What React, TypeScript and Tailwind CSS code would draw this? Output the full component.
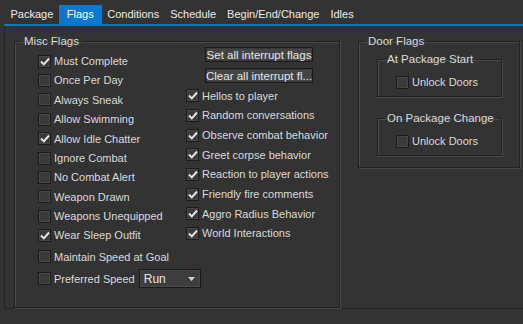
import React from 'react';

const Check: React.FC<{ checked?: boolean }> = ({ checked }) => (
    <span className="w-[13px] h-[13px] shrink-0 border border-[#1c1c1c] bg-[#3a3a3a] shadow-[inset_0_0_0_1px_#474747] flex items-center justify-center">
        {checked && (
            <svg width="10" height="9" viewBox="0 0 10 9">
                <path d="M1 4.5 L3.8 7.3 L9 1.5" fill="none" stroke="#e8e8e8" strokeWidth="1.9" />
            </svg>
        )}
    </span>
);

const Row: React.FC<{ label: string; checked?: boolean; className?: string }> = ({ label, checked, className }) => (
    <div className={`flex items-center gap-[3px] ${className ?? 'h-[19.4px]'}`}>
        <Check checked={checked} />
        <span className="whitespace-nowrap">{label}</span>
    </div>
);

const Group: React.FC<{ title: string; className?: string; children: React.ReactNode }> = ({ title, className, children }) => (
    <fieldset className={`shrink-0 border border-[#232323] shadow-[1px_1px_0_#474747,inset_1px_1px_0_#474747] ${className ?? ''}`}>
        <legend className="ml-[6px] px-[3px] leading-[13px] text-[11.5px]">{title}</legend>
        {children}
    </fieldset>
);

const TABS = ['Package', 'Flags', 'Conditions', 'Schedule', 'Begin/End/Change', 'Idles'];

const LEFT_FLAGS: [string, boolean][] = [
    ['Must Complete', true],
    ['Once Per Day', false],
    ['Always Sneak', false],
    ['Allow Swimming', false],
    ['Allow Idle Chatter', true],
    ['Ignore Combat', false],
    ['No Combat Alert', false],
    ['Weapon Drawn', false],
    ['Weapons Unequipped', false],
    ['Wear Sleep Outfit', true],
];

const INTERRUPTS = [
    'Hellos to player',
    'Random conversations',
    'Observe combat behavior',
    'Greet corpse behavior',
    'Reaction to player actions',
    'Friendly fire comments',
    'Aggro Radius Behavior',
    'World Interactions',
];

const Btn: React.FC<{ children: React.ReactNode }> = ({ children }) => (
    <button className="w-[108px] h-[15px] border border-[#1a1a1a] bg-[#444] shadow-[inset_0_0_0_1px_#3a3a3a] text-[#e6e6e6] text-[11.5px] leading-[12px] whitespace-nowrap overflow-hidden">
        {children}
    </button>
);

const App: React.FC = () => {
    return (
        <div className="w-[523px] h-[324px] bg-[#333333] text-[#dadada] text-[11px] overflow-hidden" style={{ fontFamily: '"Liberation Sans", Arial, sans-serif' }}>
            <div className="flex items-end h-[24px] pl-[5px]">
                {TABS.map(t => (
                    <div key={t} className={`h-[19px] flex items-center text-[11px] ${t === 'Flags' ? 'bg-[#0a78d2] text-white px-[8px]' : 'text-[#ececec] px-[5.5px]'}`}>
                        {t}
                    </div>
                ))}
            </div>
            <div className="ml-[4px] h-[2px] bg-[#0a78d2]" />
            <div className="ml-[4px] h-[283px] border-l border-b border-[#252525] pt-[9px] pl-[9px] flex gap-[18px]">
                <Group title="Misc Flags" className="w-[326px] h-[273px]">
                    <div className="flex pl-[23px]">
                        <div className="w-[148px] pt-[3.5px]">
                            {LEFT_FLAGS.map(([l, c]) => <Row key={l} label={l} checked={c} />)}
                            <Row label="Maintain Speed at Goal" className="h-[21px] mt-[1px]" />
                            <div className="flex items-center gap-[4px] mt-[1px] h-[21px]">
                                <Row label="Preferred Speed" className="h-[21px] shrink-0" />
                                <div className="w-[62px] h-[19px] shrink-0 border border-[#1a1a1a] bg-[#3d3d3d] shadow-[inset_0_0_0_1px_#474747] flex items-center justify-between pl-[4px] pr-[5px] text-[12px] text-[#e6e6e6]">
                                    <span>Run</span>
                                    <svg width="7" height="4" viewBox="0 0 7 4"><path d="M0 0 H7 L3.5 4 Z" fill="#d0d0d0" /></svg>
                                </div>
                            </div>
                        </div>
                        <div className="flex flex-col">
                            <div className="pl-[19px] flex flex-col gap-[6px] -mt-[1px]">
                                <Btn>Set all interrupt flags</Btn>
                                <Btn>Clear all interrupt fl...</Btn>
                            </div>
                            <div className="mt-[3px]">
                                {INTERRUPTS.map(l => <Row key={l} label={l} checked className="h-[19.7px]" />)}
                            </div>
                        </div>
                    </div>
                </Group>
                <Group title="Door Flags" className="w-[162px] h-[133px]">
                    <div className="pl-[18px] pr-[17px]">
                        <Group title="At Package Start" className="w-full h-[44px] mt-[5px]">
                            <div className="pl-[18px] pt-[7px]"><Row label="Unlock Doors" className="h-[19px]" /></div>
                        </Group>
                        <Group title="On Package Change" className="w-full h-[44px] mt-[15px]">
                            <div className="pl-[18px] pt-[7px]"><Row label="Unlock Doors" className="h-[19px]" /></div>
                        </Group>
                    </div>
                </Group>
            </div>
        </div>
    );
};

export default App;
